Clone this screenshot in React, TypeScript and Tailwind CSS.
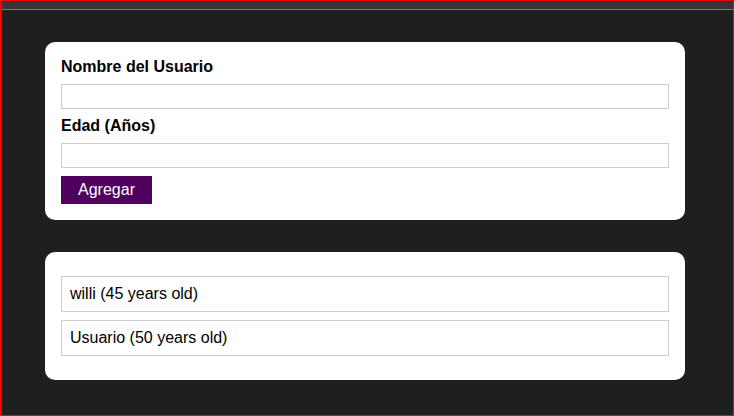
import React from "react";

export default function App() {
  const users = [
    { name: "willi", age: 45 },
    { name: "Usuario", age: 50 },
  ];
  return (
    <div
      className="w-[734px] h-[416px] bg-[#1f1f1f] border-l-2 border-t border-r border-b border-[#ff0000] flex flex-col overflow-hidden"
      style={{ fontFamily: '"Liberation Sans", Arial, sans-serif' }}
    >
      <div className="h-[9px] bg-[#353535] border-b border-[#7a7a7a] shrink-0" />
      <div className="flex flex-col gap-8 pt-8 pl-[43px]">
        <div className="w-[640px] bg-white rounded-[10px] p-4 flex flex-col text-black text-[16px] leading-[18px]">
          <label className="font-bold">Nombre del Usuario</label>
          <input className="mt-2 h-[25px] border border-[#cccccc] outline-none px-1" />
          <label className="font-bold mt-2">Edad (Años)</label>
          <input className="mt-2 h-[25px] border border-[#cccccc] outline-none px-1" />
          <div className="mt-2">
            <button className="h-[28px] w-[91px] bg-[#4e005c] text-white text-[16px] leading-[18px]">
              Agregar
            </button>
          </div>
        </div>
        <div className="w-[640px] bg-white rounded-[10px] px-4 py-6 flex flex-col gap-2 text-black text-[16px] leading-[18px]">
          {users.map((u) => (
            <div key={u.name} className="h-[36px] border border-[#cccccc] px-2 flex items-center">
              {u.name} ({u.age} years old)
            </div>
          ))}
        </div>
      </div>
    </div>
  );
}
